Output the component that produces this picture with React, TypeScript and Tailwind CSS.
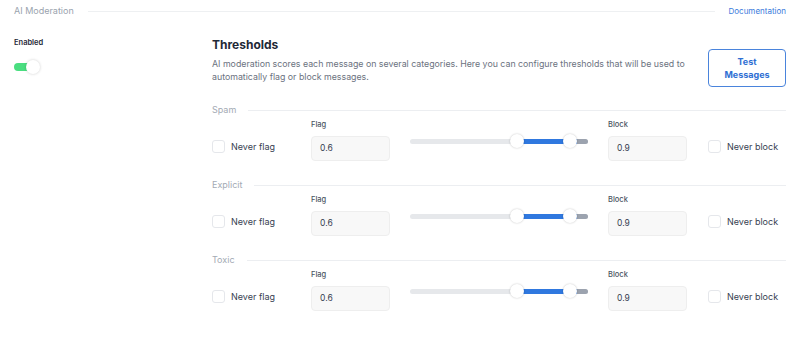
import React from 'react';

const categories = [
  { name: 'Spam', flag: '0.6', block: '0.9' },
  { name: 'Explicit', flag: '0.6', block: '0.9' },
  { name: 'Toxic', flag: '0.6', block: '0.9' },
];

function Checkbox({ label }: { label: string }) {
  return (
    <label className="flex items-center gap-[6px]">
      <span className="h-[13px] w-[13px] rounded-[3px] border border-[#e5e7eb] bg-white" />
      <span className="text-[9px] text-[#374151]">{label}</span>
    </label>
  );
}

function NumberField({ label, value }: { label: string; value: string }) {
  return (
    <div className="flex flex-col">
      <span className="h-[10px] text-[7.5px] font-medium leading-[10px] text-[#4b5563]">{label}</span>
      <div className="mt-[6px] flex h-[25px] w-[79px] items-center rounded-[4px] border border-[#eeeeee] bg-[#f8f8f8] px-[8px] text-[8.5px] text-[#374151]">
        {value}
      </div>
    </div>
  );
}

function RangeSlider() {
  return (
    <div className="relative mt-[19px] h-[5px] w-[178px] rounded-full bg-[#e6e8eb]">
      <div className="absolute left-[107px] top-0 h-[5px] w-[60px] bg-[#2f78df]" />
      <div className="absolute left-[167px] top-0 h-[5px] w-[11px] rounded-r-full bg-[#9ca3af]" />
      <div className="absolute left-[100px] top-[-5px] h-[14px] w-[14px] rounded-full bg-white shadow-[0_0_2px_rgba(0,0,0,0.25)]" />
      <div className="absolute left-[153px] top-[-5px] h-[14px] w-[14px] rounded-full bg-white shadow-[0_0_2px_rgba(0,0,0,0.25)]" />
    </div>
  );
}

function Category({ name, flag, block }: { name: string; flag: string; block: string }) {
  return (
    <div className="flex flex-col">
      <div className="flex h-[14px] items-center gap-[12px]">
        <span className="text-[9px] text-[#a3aab4]">{name}</span>
        <div className="h-px flex-1 bg-[#eceef1]" />
      </div>
      <div className="mt-[3px] flex items-start">
        <div className="mt-[20px] w-[99px]">
          <Checkbox label="Never flag" />
        </div>
        <NumberField label="Flag" value={flag} />
        <div className="ml-[20px]">
          <RangeSlider />
        </div>
        <div className="ml-[20px]">
          <NumberField label="Block" value={block} />
        </div>
        <div className="ml-[21px] mt-[20px]">
          <Checkbox label="Never block" />
        </div>
      </div>
    </div>
  );
}

export default function App() {
  return (
    <div
      className="h-[342px] w-[800px] overflow-hidden bg-white"
      style={{ fontFamily: 'Inter, "Noto Sans", sans-serif' }}
    >
      <div className="flex h-[22px] items-center gap-[14px] px-[14px]">
        <span className="text-[9px] text-[#9aa3ae]">AI Moderation</span>
        <div className="h-px flex-1 bg-[#eef0f2]" />
        <a href="#" className="text-[8px] text-[#3b7bdc]">Documentation</a>
      </div>

      <div className="flex px-[14px]">
        <div className="w-[198px] pt-[15px]">
          <div className="text-[7.5px] font-semibold text-[#1f2937]">Enabled</div>
          <div className="relative mt-[12px] h-[14px] w-[28px]">
            <div className="absolute left-0 top-[3px] h-[8px] w-[22px] rounded-full bg-[#4ade80]" />
            <div className="absolute left-[12px] top-0 h-[14px] w-[14px] rounded-full bg-white shadow-[0_0_3px_rgba(0,0,0,0.2)]" />
          </div>
        </div>

        <div className="flex-1 pt-[15px]">
          <div className="flex items-start justify-between">
            <div>
              <h2 className="text-[12px] font-bold leading-[16px] text-[#1f2937]">Thresholds</h2>
              <p className="mt-[4px] w-[480px] text-[8.8px] leading-[13px] text-[#6b7280]">
                AI moderation scores each message on several categories. Here you can configure thresholds that will be used to automatically flag or block messages.
              </p>
            </div>
            <button className="mt-[12px] h-[38px] w-[78px] rounded-[4px] border-[1.5px] border-[#4a84dc] text-[9px] font-bold leading-[13px] text-[#2f6fd3]">
              Test
              <br />
              Messages
            </button>
          </div>

          <div className="mt-[16px] flex flex-col gap-[17px]">
            {categories.map((c) => (
              <Category key={c.name} {...c} />
            ))}
          </div>
        </div>
      </div>
    </div>
  );
}
